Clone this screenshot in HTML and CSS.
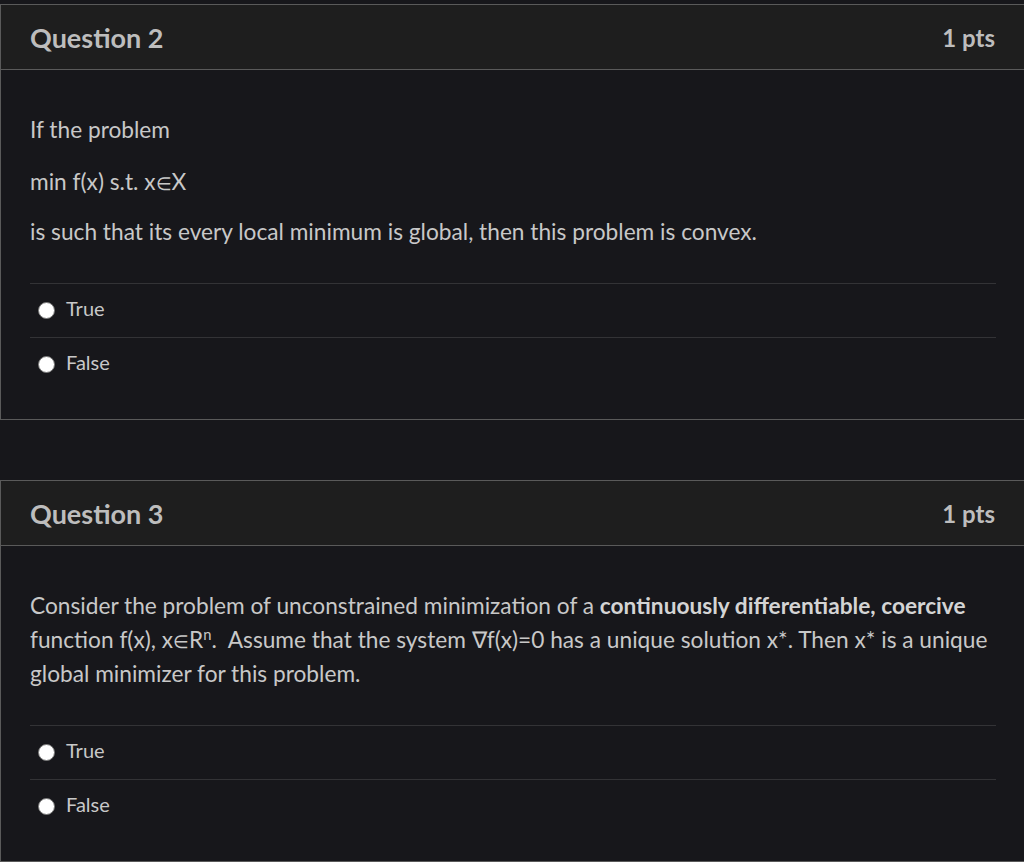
FILE: index.html
```html
<!DOCTYPE html>
<html>
<head>
<meta charset="utf-8">
<link rel="stylesheet" href="styles.css">
</head>
<body>
<div class="page">
  <section class="question">
    <header class="q-header">
      <h2 class="q-title">Question 2</h2>
      <span class="q-points">1 pts</span>
    </header>
    <div class="q-body">
      <div class="q-text">
        <p>If the problem</p>
        <p>min f(x) s.t. x<span class="sym">∈</span>X</p>
        <p>is such that its every local minimum is global, then this problem is convex.</p>
      </div>
      <div class="answers">
        <div class="answer"><span class="radio"></span><span class="label">True</span></div>
        <div class="answer"><span class="radio"></span><span class="label">False</span></div>
      </div>
    </div>
  </section>

  <section class="question">
    <header class="q-header">
      <h2 class="q-title">Question 3</h2>
      <span class="q-points">1 pts</span>
    </header>
    <div class="q-body">
      <div class="q-text">
        <p>Consider the problem of unconstrained minimization of a <strong>continuously differentiable, coercive</strong> function f(x), x<span class="sym">∈</span>R<sup>n</sup>.&nbsp; Assume that the system ∇f(x)=0 has a unique solution x*. Then x* is a unique global minimizer for this problem.</p>
      </div>
      <div class="answers">
        <div class="answer"><span class="radio"></span><span class="label">True</span></div>
        <div class="answer"><span class="radio"></span><span class="label">False</span></div>
      </div>
    </div>
  </section>
</div>
</body>
</html>
```
FILE: styles.css
```css
html, body {
  margin: 0;
  padding: 0;
  background: #17171b;
}
body {
  font-family: Lato, "Open Sans", sans-serif;
  color: #c8c8c8;
  overflow: hidden;
}
.page {
  padding-top: 4px;
  width: 1026px;
}
.question {
  border: 1px solid #5a5a5a;
  background: #17171b;
  margin-bottom: 60px;
}
.q-header {
  background: #1e1e1e;
  border-bottom: 1px solid #5a5a5a;
  display: flex;
  align-items: center;
  justify-content: space-between;
  padding: 0 30px 0 29px;
  box-sizing: border-box;
  height: 65px;
}
.q-title {
  margin: 0;
  font-size: 27px;
  font-weight: 700;
  color: #bdbdbd;
}
.q-points {
  font-size: 24px;
  font-weight: 700;
  color: #bdbdbd;
}
.q-body {
  padding: 43px 29px 28px 29px;
}
.q-text {
  font-size: 22.7px;
  line-height: 34px;
}
.q-text p {
  margin: 0 0 18px 0;
}
.q-text p:nth-child(2) {
  margin-bottom: 16px;
}
.q-text p:last-child {
  margin-bottom: 0;
}
.q-text strong {
  font-weight: 700;
  color: #d4d4d4;
}
.sym {
  font-size: 0.8em;
  line-height: 0;
}
.q-text sup {
  font-size: 0.65em;
  line-height: 0;
  vertical-align: 0.55em;
}
.answers {
  margin-top: 34px;
}
.answer {
  border-top: 1px solid #333336;
  height: 53px;
  display: flex;
  align-items: center;
  padding-left: 8px;
}
.radio {
  width: 17px;
  height: 17px;
  border-radius: 50%;
  background: #ffffff;
  border: 1px solid #777;
  box-sizing: border-box;
  margin-right: 11px;
  margin-bottom: 1px;
}
.label {
  font-size: 20px;
  color: #c8c8c8;
  margin-bottom: 5px;
}
```
